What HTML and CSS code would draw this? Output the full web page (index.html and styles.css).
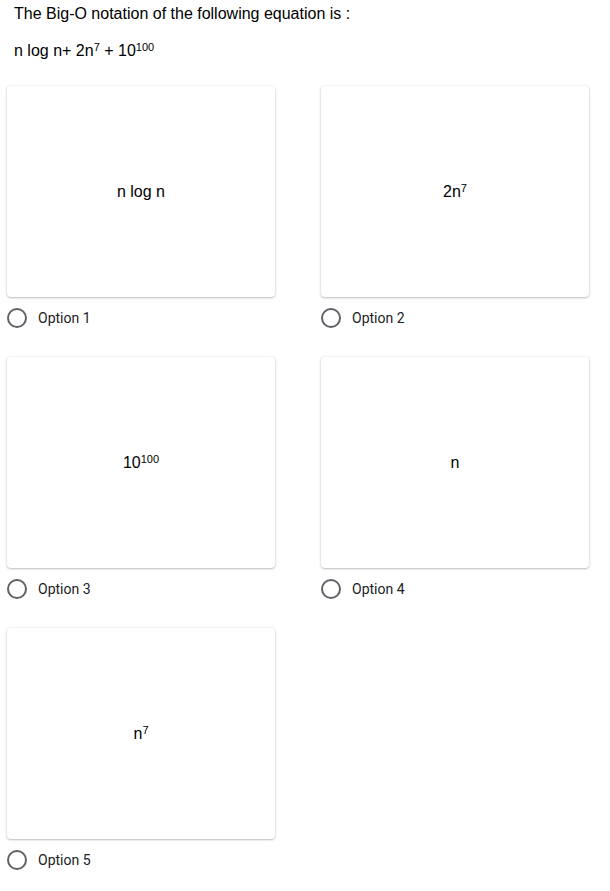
FILE: index.html
```html
<!DOCTYPE html>
<html>
<head>
<meta charset="utf-8">
<link rel="stylesheet" href="styles.css">
</head>
<body>
<div class="question">
  <p class="line">The Big-O notation of the following equation is :</p>
  <p class="line eq">n log n+ 2n<sup>7</sup> + 10<sup>100</sup></p>
</div>
<div class="grid">
  <div class="item">
    <div class="card"><span class="expr">n log n</span></div>
    <label class="option"><span class="radio"></span><span class="label">Option 1</span></label>
  </div>
  <div class="item">
    <div class="card"><span class="expr">2n<sup>7</sup></span></div>
    <label class="option"><span class="radio"></span><span class="label">Option 2</span></label>
  </div>
  <div class="item">
    <div class="card"><span class="expr">10<sup>100</sup></span></div>
    <label class="option"><span class="radio"></span><span class="label">Option 3</span></label>
  </div>
  <div class="item">
    <div class="card"><span class="expr">n</span></div>
    <label class="option"><span class="radio"></span><span class="label">Option 4</span></label>
  </div>
  <div class="item">
    <div class="card"><span class="expr">n<sup>7</sup></span></div>
    <label class="option"><span class="radio"></span><span class="label">Option 5</span></label>
  </div>
</div>
</body>
</html>
```
FILE: styles.css
```css
html, body {
  margin: 0;
  padding: 0;
  background: #ffffff;
}
body {
  font-family: "Liberation Sans", Arial, sans-serif;
  color: #202124;
}
.question {
  padding: 5px 0 0 14px;
}
.line {
  margin: 0;
  font-size: 16px;
  line-height: 18px;
  color: #000;
}
.eq {
  margin-top: 19px;
}
sup {
  font-size: 11px;
  line-height: 0;
  vertical-align: 5px;
}
.grid {
  display: grid;
  grid-template-columns: 268px 268px;
  column-gap: 46px;
  padding: 26px 0 0 7px;
}
.item {
  display: flex;
  flex-direction: column;
  height: 271px;
}
.card {
  height: 211px;
  background: #fff;
  border-radius: 4px;
  box-shadow: 0 1px 2px rgba(60, 64, 67, 0.3), 0 0 3px rgba(60, 64, 67, 0.12);
  display: flex;
  align-items: center;
  justify-content: center;
}
.expr {
  font-size: 16px;
  color: #000;
}
.option {
  display: flex;
  align-items: center;
  margin-top: 11px;
  height: 20px;
}
.radio {
  width: 16px;
  height: 16px;
  border: 2px solid #5f6368;
  border-radius: 50%;
  flex: none;
}
.label {
  margin-left: 11px;
  font-family: Roboto, "Liberation Sans", sans-serif;
  font-size: 14px;
  color: #202124;
}
```
